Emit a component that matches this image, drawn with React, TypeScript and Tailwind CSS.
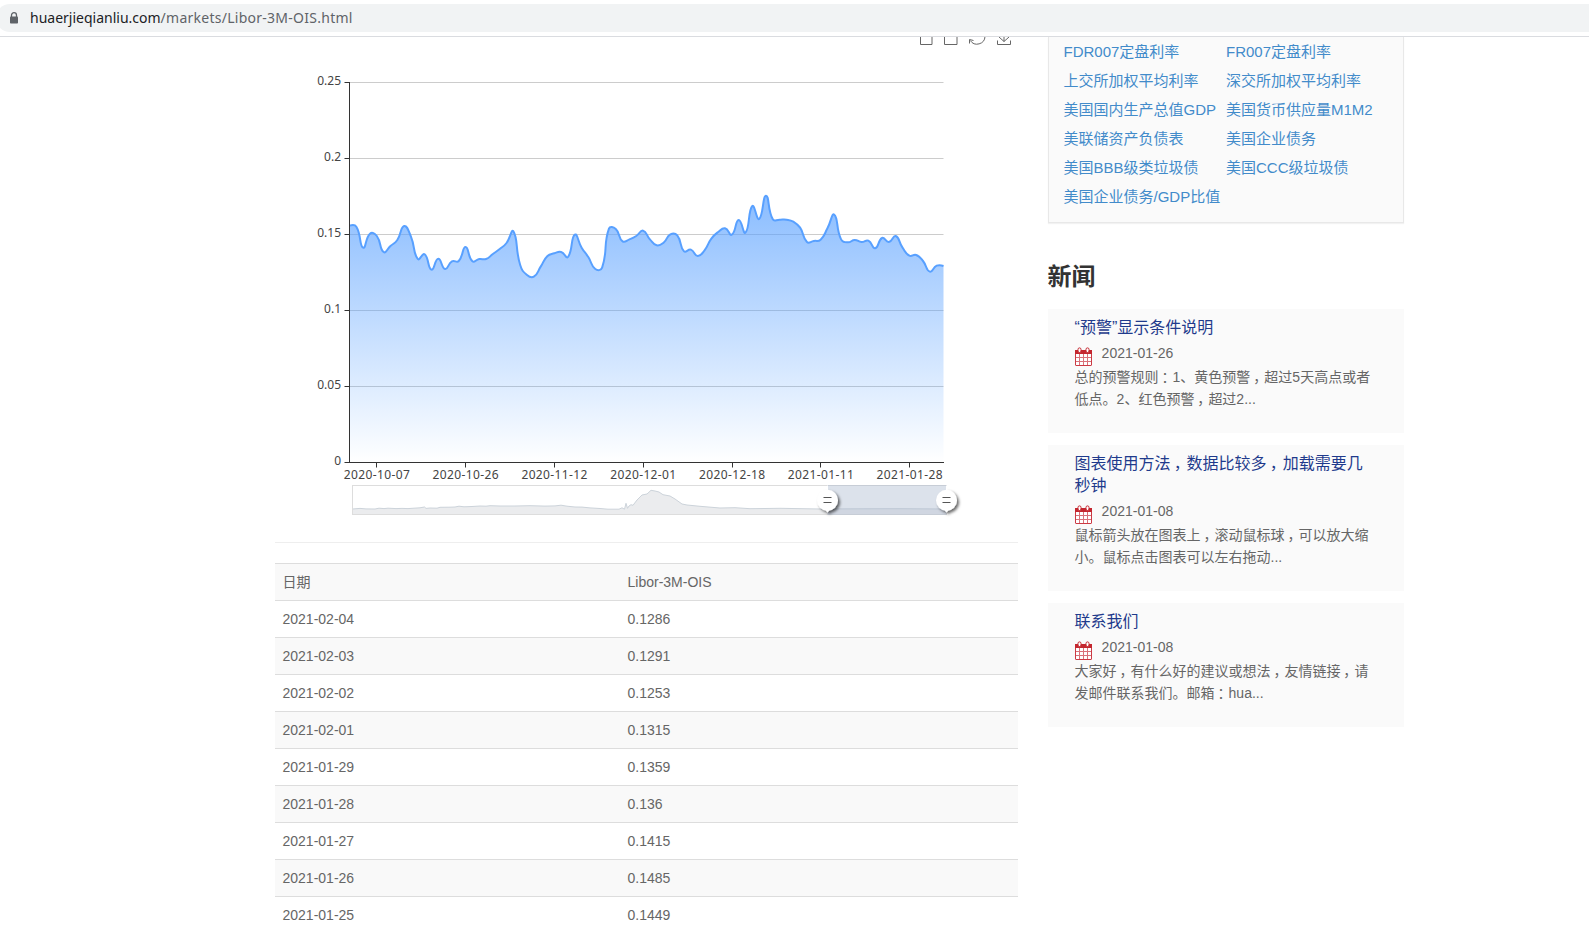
import React from "react";

const SERIES = [
  137, 140, 203, 161, 168, 216, 198, 180, 138, 170, 237, 223, 269, 236, 267, 244, 243, 201, 244, 237, 237, 222,
  207, 189, 154, 255, 285, 290, 260, 228, 220, 216, 231, 164, 203, 232, 267, 263, 146, 147, 184, 178, 168, 152,
  178, 196, 188, 163, 166, 214, 209, 228, 211, 176, 156, 145, 164, 120, 158, 78, 117, 47, 118, 119, 119, 125,
  143, 186, 183, 179, 145, 104, 178, 187, 180, 186, 182, 205, 174, 186, 168, 203, 227, 225, 243, 275, 257, 258,
];

const POINTS = SERIES.map((v, i) => [349.5 + (i * 594) / 87, 180 + v / 3]);

function smoothPath(p: number[][]) {
  let d = `M${p[0][0]} ${p[0][1]}`;
  let out = p[0];
  for (let i = 1; i < p.length; i++) {
    const cur = p[i];
    const prev = p[i - 1];
    const next = p[i + 1];
    let cin = cur;
    let cout = cur;
    if (next) {
      const vx = next[0] - prev[0];
      const vy = next[1] - prev[1];
      const l0 = Math.hypot(cur[0] - prev[0], cur[1] - prev[1]);
      const l1 = Math.hypot(next[0] - cur[0], next[1] - cur[1]);
      const r = l1 / (l0 + l1);
      cin = [cur[0] - vx * 0.5 * (1 - r), cur[1] - vy * 0.5 * (1 - r)];
      cout = [cur[0] + vx * 0.5 * r, cur[1] + vy * 0.5 * r];
    }
    d += `C${out[0]} ${out[1]} ${cin[0]} ${cin[1]} ${cur[0]} ${cur[1]}`;
    out = cout;
  }
  return d;
}

const LINE = smoothPath(POINTS);

const OVERVIEW =
  "352.5,509 360,508.4 366,508.9 375,509 379,508.2 384,508.6 388,508.2 396,508.6 402,508.4 408,508.6 414,508.2 420,507.8 424.5,507 426,508.4 430,508 437,508.2 440,507.3 450,507.2 455,507 459,506.2 464,506.8 472,506.5 480,506 486,506.2 490,505.7 500,506 515,506 530,505.7 545,506.1 555,505.9 561,505.2 567,506.2 575,507 582,507.1 590,507.9 600,508.5 608,509.2 619,509.2 622,507.8 624.5,509.2 626,503.3 627.5,508.3 629,506 631,504.7 633,505.3 637,500 642,495 647,494 651,490.3 655,491 659,492 663,494.7 670,496 675,499 682,504 687,505 700,506.3 720,508 735,507.7 750,508.7 780,508.3 820,509 860,508.8 900,508.7 947,509";

const Y_TICKS: [string, number][] = [
  ["0.25", 82.5],
  ["0.2", 158.5],
  ["0.15", 234.5],
  ["0.1", 310.5],
  ["0.05", 386.5],
  ["0", 462.5],
];

const X_TICKS = ["2020-10-07", "2020-10-26", "2020-11-12", "2020-12-01", "2020-12-18", "2021-01-11", "2021-01-28"];

function Handle({ x }: { x: number }) {
  return (
    <g>
      <g filter="url(#handle-shadow)">
        <path d={`M${x - 3} 509L${x} 512.5L${x + 3} 509z`} fill="#fff" />
        <circle cx={x} cy="500.3" r="10.5" fill="#fff" />
      </g>
      <path d={`M${x} 485.5V490`} stroke="#fff" />
      <path d={`M${x - 4} 497.5h8M${x - 4} 502.5h8`} stroke="#555" strokeWidth="1.2" />
    </g>
  );
}

function Chart() {
  return (
    <svg className="block h-[505px] w-[743px]" viewBox="275 37 743 505">
      <defs>
        <linearGradient id="area-fill" x1="0" y1="0" x2="0" y2="1">
          <stop offset="0" stopColor="#58a0ff" stopOpacity="0.7" />
          <stop offset="1" stopColor="#58a0ff" stopOpacity="0" />
        </linearGradient>
        <filter id="handle-shadow" x="-50%" y="-50%" width="200%" height="200%">
          <feDropShadow dx="2" dy="2" stdDeviation="1.5" floodColor="#000" floodOpacity="0.6" />
        </filter>
      </defs>
      <g fill="none" stroke="#666">
        <path d="M920.5 33V44.5H932V33M944.5 33V44.5H957V33" />
        <path d="M970.3 40.5A8 8 0 0 0 985 36.5M969.5 43.5V39.5L973.5 40.5" />
        <path d="M997.5 40.5V44.5H1010.5V40.5M1004 34V41.5M999 37L1004 41.5L1009 37" />
      </g>
      {Y_TICKS.map(([label, y]) => (
        <g key={label}>
          {label !== "0" && <path d={`M350 ${y}H943.5`} stroke="#ccc" />}
          <text
            x="341"
            y={y + 2.8}
            textAnchor="end"
            className="fill-[#444] font-['Noto_Sans',sans-serif] text-[12px]"
          >
            {label}
          </text>
        </g>
      ))}
      <path d={`${LINE}V462.5H349.5Z`} fill="url(#area-fill)" />
      <path d={LINE} fill="none" stroke="#58a0ff" strokeWidth="2" strokeLinejoin="bevel" />
      {Y_TICKS.map(([label, y]) => (
        <path key={label} d={`M344.5 ${y}H349.5`} stroke="#333" />
      ))}
      <path d="M349.5 82V463M349 462.5H944" stroke="#333" />
      {X_TICKS.map((label, i) => (
        <g key={label}>
          <path d={`M${Math.floor(376.8 + i * 88.8) + 0.5} 462V467.5`} stroke="#333" />
          <text
            x={376.8 + i * 88.8}
            y="479"
            textAnchor="middle"
            textLength="66"
            className="fill-[#444] font-['Noto_Sans',sans-serif] text-[12px]"
          >
            {label}
          </text>
        </g>
      ))}
      <polygon points={`352.5,514.5 ${OVERVIEW} 947,514.5`} fill="#ebecee" />
      <polyline points={OVERVIEW} fill="none" stroke="#ccd3da" />
      <rect x="352.5" y="485.5" width="594" height="29" fill="none" stroke="#ddd" />
      <rect x="827.5" y="485" width="119" height="30" fill="#a7b7cc" fillOpacity="0.4" />
      <Handle x={827.5} />
      <Handle x={946.5} />
    </svg>
  );
}

const ROWS = [
  ["日期", "Libor-3M-OIS"],
  ["2021-02-04", "0.1286"],
  ["2021-02-03", "0.1291"],
  ["2021-02-02", "0.1253"],
  ["2021-02-01", "0.1315"],
  ["2021-01-29", "0.1359"],
  ["2021-01-28", "0.136"],
  ["2021-01-27", "0.1415"],
  ["2021-01-26", "0.1485"],
  ["2021-01-25", "0.1449"],
];

const LINKS = [
  "FDR007定盘利率",
  "FR007定盘利率",
  "上交所加权平均利率",
  "深交所加权平均利率",
  "美国国内生产总值GDP",
  "美国货币供应量M1M2",
  "美联储资产负债表",
  "美国企业债务",
  "美国BBB级类垃圾债",
  "美国CCC级垃圾债",
  "美国企业债务/GDP比值",
];

const NEWS = [
  {
    title: ["“预警”显示条件说明"],
    date: "2021-01-26",
    body: ["总的预警规则：1、黄色预警，超过5天高点或者", "低点。2、红色预警，超过2..."],
  },
  {
    title: ["图表使用方法，数据比较多，加载需要几", "秒钟"],
    date: "2021-01-08",
    body: ["鼠标箭头放在图表上，滚动鼠标球，可以放大缩", "小。鼠标点击图表可以左右拖动..."],
  },
  {
    title: ["联系我们"],
    date: "2021-01-08",
    body: ["大家好，有什么好的建议或想法，友情链接，请", "发邮件联系我们。邮箱：hua..."],
  },
];

/* Full-width commas and colons sit in the middle of their cell. */
function Line({ text }: { text: string }) {
  return (
    <span className="block whitespace-nowrap">
      {text.split(/([，：])/).map((part, i) =>
        part === "，" || part === "：" ? (
          <span key={i} className="pr-[0.3em] pl-[0.2em] [font-feature-settings:'halt']">
            {part}
          </span>
        ) : (
          part
        ),
      )}
    </span>
  );
}

function CalendarIcon() {
  return (
    <svg className="mt-[5px] h-[19px] w-[17px] shrink-0" viewBox="0 0 17 19">
      <rect x="0.5" y="3.5" width="16" height="15" rx="0.5" fill="#fff" stroke="#cc3a44" />
      <path d="M0 3h17V7H0z" fill="#c4272f" />
      <path d="M4.5 7v11M8.5 7v11M12.5 7v11M1 10.5h15M1 14.5h15" stroke="#d9727a" />
      <rect x="3" y="0.9" width="3" height="4.6" rx="1.5" fill="#fff" stroke="#c4272f" />
      <rect x="11" y="0.9" width="3" height="4.6" rx="1.5" fill="#fff" stroke="#c4272f" />
    </svg>
  );
}

export default function App() {
  return (
    <div className="flex h-[933px] w-[1589px] flex-col overflow-hidden bg-white font-['Liberation_Sans','Noto_Sans_CJK_SC',sans-serif] text-[14px] text-[#666]">
      <header className="h-[37px] shrink-0 border-b border-[#dadce0] pt-1">
        <div className="-ml-1 flex h-7 items-center rounded-l-full bg-[#f1f3f4] pl-[13px]">
          <svg className="h-3 w-[10px]" viewBox="0 0 10 12">
            <path d="M2.5 5V3.2a2.5 2.5 0 0 1 5 0V5" fill="none" stroke="#5f6368" strokeWidth="1.3" />
            <rect x="1" y="4.5" width="8" height="7" rx="0.8" fill="#5f6368" />
          </svg>
          <div className="ml-[11px] pb-[2px] font-['Noto_Sans',sans-serif] text-[14px] whitespace-nowrap text-[#5f6368]">
            <span className="text-[#202124]">huaerjieqianliu.com</span>
            <span className="tracking-[0.26px]">/markets/Libor-3M-OIS.html</span>
          </div>
        </div>
      </header>
      <div className="flex min-h-0 flex-1 gap-[30px] overflow-hidden pl-[275px]">
        <main className="w-[743px] shrink-0">
          <Chart />
          <hr className="mb-5 border-[#eee]" />
          <table className="w-full table-fixed border-collapse">
            <colgroup>
              <col className="w-[344px]" />
              <col />
            </colgroup>
            <tbody>
              {ROWS.map(([date, value]) => (
                <tr key={date} className="h-[37px] border-t border-[#ddd] odd:bg-[#f9f9f9]">
                  <td className="py-2 pl-[7.5px] leading-5">{date}</td>
                  <td className="py-2 pl-[8.5px] leading-5">{value}</td>
                </tr>
              ))}
            </tbody>
          </table>
        </main>
        <aside className="w-[356px] shrink-0">
          <nav className="grid h-[186px] grid-cols-[162.5px_1fr] content-start border border-t-0 border-[#e8e8e8] bg-[#fafafa] pl-[14.5px] text-[15px] leading-[29px] whitespace-nowrap text-[#428bca] shadow-[0_1px_1px_rgba(0,0,0,0.05)]">
            {LINKS.map((link) => (
              <a key={link}>{link}</a>
            ))}
          </nav>
          <h2 className="mt-[37px] -ml-[0.5px] h-[49px] text-[24px] leading-[34px] font-bold text-[#333]">新闻</h2>
          <div className="flex flex-col gap-3">
            {NEWS.map((item) => (
              <article key={item.title[0]} className="bg-[#fafafa] px-[26.6px] pt-2 pb-[23px] leading-[22px]">
                <h3 className="text-[16px] text-[#1f3a8c]">
                  {item.title.map((t) => (
                    <Line key={t} text={t} />
                  ))}
                </h3>
                <div className="flex h-[27px] gap-[10px] pt-[3px]">
                  <CalendarIcon />
                  <span>{item.date}</span>
                </div>
                <p>
                  {item.body.map((t) => (
                    <Line key={t} text={t} />
                  ))}
                </p>
              </article>
            ))}
          </div>
        </aside>
      </div>
    </div>
  );
}
